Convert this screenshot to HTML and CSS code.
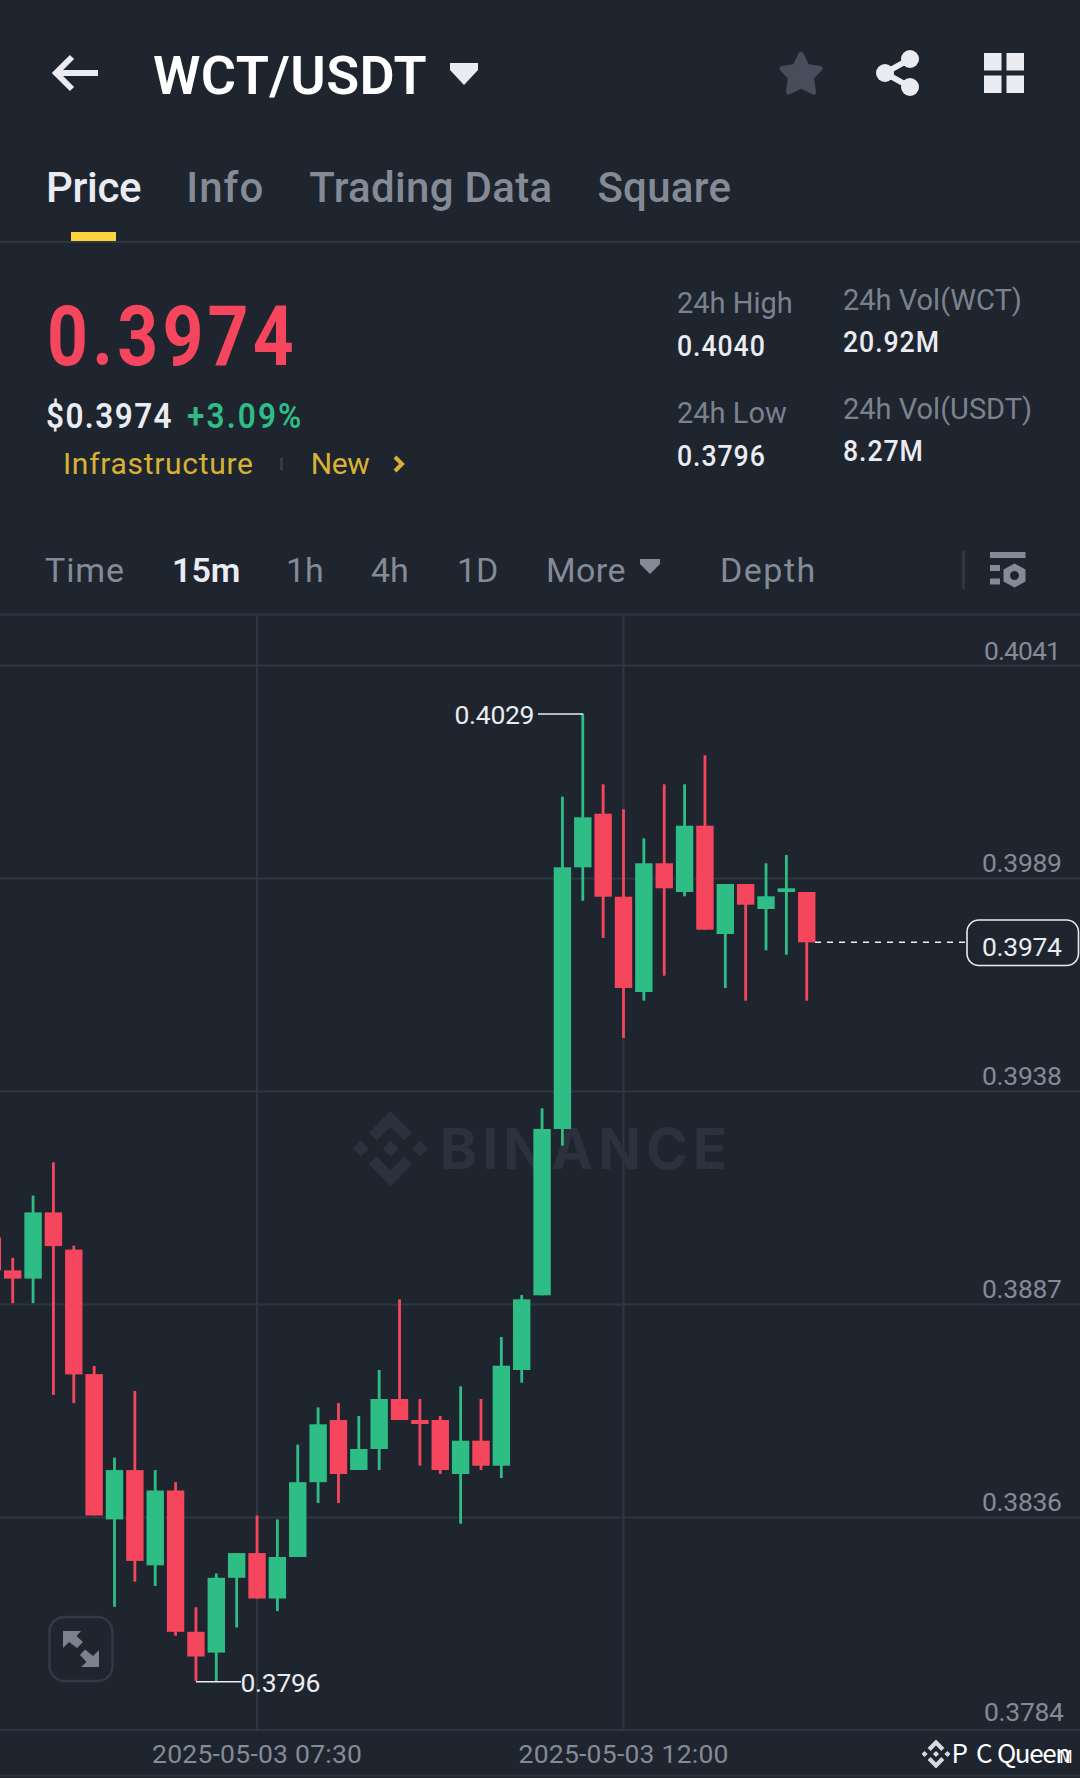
FILE: index.html
```html
<!DOCTYPE html>
<html lang="en">
<head>
    <meta charset="UTF-8">
    <meta name="viewport" content="width=device-width, initial-scale=1.0">
    <title>WCT/USDT</title>
    <link rel="stylesheet" href="styles.css">
</head>
<body>
    <header class="topbar">
        <svg class="back" width="48" height="40" viewBox="0 0 48 40">
            <path d="M47 20H6M21 4L5 20L21 36" fill="none" stroke="#eaecf2" stroke-width="6"/>
        </svg>
        <h1>WCT/USDT</h1>
        <svg class="caret" width="28" height="22" viewBox="0 0 28 22"><path d="M0 0H28V7L14 22L0 7Z" fill="#eaecf2"/></svg>
        <div class="actions">
            <svg width="46" height="46" viewBox="0 0 46 46">
                <path d="M23 4L29 16.5L42 18.5L33.5 27.5L35.5 42L23 36L10.5 42L12.5 27.5L4 18.5L17 16.5Z" fill="#474d5b" stroke="#474d5b" stroke-width="5" stroke-linejoin="round"/>
            </svg>
            <svg width="46" height="48" viewBox="0 0 46 48">
                <path d="M36 10L11 24L36 38" fill="none" stroke="#eaecf2" stroke-width="6"/>
                <circle cx="36" cy="10" r="9" fill="#eaecf2"/>
                <circle cx="11" cy="24" r="9" fill="#eaecf2"/>
                <circle cx="36" cy="38" r="9" fill="#eaecf2"/>
            </svg>
            <svg width="40" height="40" viewBox="0 0 40 40"><path d="M0 0h17.5v17.5H0zM22.5 0H40v17.5H22.5zM0 22.5h17.5V40H0zM22.5 22.5H40V40H22.5z" fill="#eaecf2"/></svg>
        </div>
    </header>

    <nav class="tabs">
        <a class="tab active">Price</a>
        <a class="tab info">Info</a>
        <a class="tab">Trading Data</a>
        <a class="tab">Square</a>
    </nav>

    <section class="summary">
        <div class="quote">
            <div class="price">0.3974</div>
            <div class="change"><span class="usd">$0.3974</span><span class="up">+3.09%</span></div>
            <div class="tags">
                <span class="tag">Infrastructure</span>
                <i class="tag-line"></i>
                <span class="tag new">New</span>
                <svg width="14" height="18" viewBox="0 0 14 18"><path d="M3 2L10 9L3 16" fill="none" stroke="#d9b233" stroke-width="4"/></svg>
            </div>
        </div>
        <dl class="stats">
            <dt>24h High</dt>
            <dd>0.4040</dd>
            <dt>24h Low</dt>
            <dd>0.3796</dd>
        </dl>
        <dl class="stats vol">
            <dt>24h Vol(WCT)</dt>
            <dd>20.92M</dd>
            <dt>24h Vol(USDT)</dt>
            <dd>8.27M</dd>
        </dl>
    </section>

    <nav class="periods">
        <a class="time">Time</a>
        <a class="m15">15m</a>
        <a class="h1">1h</a>
        <a class="h4">4h</a>
        <a class="d1">1D</a>
        <a class="more">More <svg width="20" height="15" viewBox="0 0 20 15"><path d="M0 0H20V5L10 15L0 5Z" fill="#848a96"/></svg></a>
        <a class="depth">Depth</a>
        <i class="period-line"></i>
        <svg width="36" height="38" viewBox="0 0 36 38">
            <path d="M0 1H35.5V7H0zM0 14H10V20H0zM0 27.5H10V33.5H0z" fill="#848a96"/>
            <path d="M24.500 12.500L35.500 18.500V30.500L24.500 36.500L13.500 30.500V18.500ZM24.500 20A4.500 4.500 0 1 0 24.500 29A4.500 4.500 0 1 0 24.500 20Z" fill="#848a96" fill-rule="evenodd"/>
        </svg>
    </nav>

    <main class="chart">
        <svg width="1080" height="1162" viewBox="0 616 1080 1162">
            <defs>
                <symbol id="logo" viewBox="0 0 76 76">
                    <path d="M38 0L60 22L52 30L38 16L24 30L16 22ZM38 76L60 54L52 46L38 60L24 46L16 54ZM0 38L8 30L16 38L8 46ZM60 38L68 30L76 38L68 46ZM30 38L38 30L46 38L38 46Z"/>
                </symbol>
            </defs>
            <g class="grid">
                <path d="M0 665.500H1080M0 878.500H1080M0 1091.500H1080M0 1304.500H1080M0 1517.500H1080M0 1730H1080M257 616V1730M623.500 616V1730"/>
                <path d="M0 1775.500H1080"/>
            </g>
            <g class="watermark">
                <use href="#logo" x="353" y="1111" width="75" height="75"/>
                <text x="440" y="1169" textLength="287">BINANCE</text>
            </g>
            <g id="candles"></g>
            <path class="mark" d="M538 714H583M196 1681.700H241"/>
            <g class="label light">
                <text x="454.500" y="724" textLength="80">0.4029</text>
                <text x="240.500" y="1692" textLength="80">0.3796</text>
            </g>
            <path class="last-line" d="M815 942.300H967"/>
            <rect class="last-box" x="967" y="920" width="111.500" height="45.500" rx="12"/>
            <text class="label light" x="982" y="956" textLength="80">0.3974</text>
            <g class="label">
                <text x="984" y="660" textLength="77">0.4041</text>
                <text x="982" y="872" textLength="80">0.3989</text>
                <text x="982" y="1085" textLength="80">0.3938</text>
                <text x="982" y="1298" textLength="80">0.3887</text>
                <text x="982" y="1511" textLength="80">0.3836</text>
                <text x="984" y="1721" textLength="80">0.3784</text>
                <text x="152" y="1763" textLength="210">2025-05-03 07:30</text>
                <text x="518.500" y="1763" textLength="210">2025-05-03 12:00</text>
            </g>
            <g class="expand">
                <rect x="49.500" y="1617" width="63" height="64" rx="15"/>
                <path d="M63 1631H81L76.500 1636L83 1642L77 1648L69 1642L63 1648ZM99 1667H81L86.500 1662L80 1655L85 1649.500L93 1656L99 1650Z"/>
            </g>
            <g class="user">
                <use href="#logo" x="921.500" y="1739.500" width="29" height="29"/>
                <text x="951.500" y="1763">P</text>
                <text x="976" y="1763">C</text>
                <text x="997" y="1763" textLength="74">Queen</text>
                <text class="tail" x="1059" y="1763" textLength="13">M</text>
            </g>
        </svg>
    </main>
    <script src="chart.js"></script>
</body>
</html>
```
FILE: styles.css
```css
body { margin: 0; background-color: #1e252f; color: #eaecf2; font-family: Roboto, "Liberation Sans", sans-serif; width: 1080px; height: 1778px; overflow: hidden; }
svg { display: block; flex: none; }
.topbar { display: flex; align-items: center; height: 146px; padding: 0 56px 0 51px; }
.topbar h1 { margin: 5px 0 0 54px; font-size: 54px; font-weight: 600; line-height: 62px; color: #fff; letter-spacing: 0.4px; }
.caret { margin-left: 23px; margin-top: 2px; }
.actions { display: flex; align-items: center; margin-left: auto; }
.actions svg { margin-left: 64px; }
.actions svg:nth-child(2) { margin-left: 50px; }

.tabs { display: flex; gap: 45px; height: 95px; padding-left: 46px; border-bottom: 2px solid #303741; font-size: 42px; font-weight: 500; line-height: 84px; color: #848a96; letter-spacing: 0.3px; }
.tab { display: block; }
.tab.info { letter-spacing: 1px; }
.active { color: #eaecf2; display: flex; flex-direction: column; letter-spacing: -0.3px; }
.active::after { content: ""; width: 45px; height: 9px; margin: 2px 0 0 25px; background: #fad33f; }

.summary { display: flex; height: 285px; }
.quote { width: 631px; padding-left: 46px; }
/* narrow digits */
.price, .usd, .up, .stats dd { transform-origin: 0 50%; }
.price { margin: 45px 0 0 1px; font-size: 84px; line-height: 98px; font-weight: 700; color: #f6465d; letter-spacing: 5px; transform: scaleX(0.85); }
.change { display: flex; margin-top: 11px; font-size: 35px; line-height: 40px; font-weight: 600; }
.usd, .up { transform: scaleX(0.9); letter-spacing: 1.6px; }
.usd { width: 141px; }
.up { color: #2ebd85; letter-spacing: 2.4px; }
.tags { display: flex; align-items: center; margin-top: 6px; padding-left: 17px; font-size: 30px; line-height: 42px; color: #d9b233; }
.tag { letter-spacing: 0.7px; }
.tag.new { letter-spacing: -0.4px; }
.tag-line { width: 3px; height: 12px; margin: 0 28px 0 26px; background: #343b47; }
.tags svg { margin-left: 23px; }
.stats { width: 166px; margin: 39px 0 0; font-size: 29px; line-height: 42px; white-space: nowrap; }
.stats dt { color: #7b818d; }
.stats dd { margin: 1px 0 25px; font-weight: 500; transform: scaleX(0.92); letter-spacing: 1px; }
.vol { margin-top: 36px; width: auto; }
.vol dd { margin: 0 0 25px; }

.periods { display: flex; align-items: center; box-sizing: border-box; height: 88px; padding: 0 54px 2px 45px; border-bottom: 3px solid #2a313c; font-size: 34px; line-height: 42px; color: #848a96; }
.periods a { display: flex; align-items: center; white-space: nowrap; }
.time { width: 127px; letter-spacing: 0.9px; }
.m15 { width: 114px; font-weight: 600; color: #eaecf2; }
.h1 { width: 85px; }
.h4 { width: 86px; }
.d1 { width: 89px; }
.more { width: 174px; letter-spacing: 0.4px; }
.more svg { margin: -6px 0 0 14px; }
.depth { letter-spacing: 1.5px; }
.period-line { width: 3px; height: 38px; margin: 0 25px 0 auto; background: #303741; }

.grid { fill: none; stroke: #2f3641; stroke-width: 2; }
.watermark { fill: #2b323d; }
.watermark text { font: 700 56px Inter, sans-serif; }
.red { fill: #f6465d; }
.green { fill: #2ebd85; }
.mark { fill: none; stroke: #eaecf2; stroke-width: 1.6; }
.label { font-size: 26.5px; fill: #848a96; }
.light { fill: #eaecf2; }
.last-line { stroke: #eaecf2; stroke-width: 1.6; stroke-dasharray: 6 6; }
.last-box { fill: #1e252f; stroke: #eaecf2; stroke-width: 1.6; }
.expand rect { fill: #1e252f; stroke: #333a46; stroke-width: 2.5; }
.expand path { fill: #7b818d; }
.user { fill: #fff; font: 26px "Noto Sans CJK SC", "Noto Sans", sans-serif; }
.user use { fill: #d6d9df; }
.user .tail { font-size: 17px; }
```
FILE: chart.js
```javascript
// color, wick top, body top, body bottom, wick bottom
const candles = [
    ['red', 1237.5, 1237.5, 1270.4, 1270.4],
    ['red', 1257.8, 1270.4, 1278.6, 1303.2],
    ['green', 1195.6, 1212.4, 1278.6, 1303.2],
    ['red', 1162.3, 1212.4, 1246.1, 1394.9],
    ['red', 1245.7, 1249.6, 1374.4, 1403.1],
    ['red', 1365.9, 1374.1, 1515.5, 1515.5],
    ['green', 1457.6, 1470.1, 1519.4, 1606.8],
    ['red', 1391, 1470.1, 1560.9, 1581.7],
    ['green', 1470.1, 1490.5, 1565.3, 1586],
    ['red', 1482.2, 1490.5, 1631.8, 1635.7],
    ['red', 1607.2, 1631.8, 1656.5, 1681.1],
    ['green', 1573.5, 1577.8, 1652.6, 1681.1],
    ['green', 1553.1, 1553.1, 1577.8, 1627.5],
    ['red', 1515.5, 1553.1, 1598.5, 1598.5],
    ['green', 1519.4, 1557, 1598.5, 1611.1],
    ['green', 1444.6, 1482.2, 1557, 1557],
    ['green', 1407.4, 1424.3, 1482.2, 1503],
    ['red', 1403.1, 1420, 1474, 1503],
    ['green', 1416, 1449, 1470, 1470],
    ['green', 1370, 1399, 1449, 1470],
    ['red', 1299.3, 1399, 1420, 1420],
    ['red', 1399, 1420, 1424, 1465.7],
    ['red', 1416, 1420, 1470, 1474],
    ['green', 1386.3, 1440.7, 1474, 1523.7],
    ['red', 1399, 1440.7, 1465.7, 1470],
    ['green', 1337, 1365.7, 1465.7, 1478],
    ['green', 1295, 1299.3, 1370, 1382.7],
    ['green', 1108.3, 1129, 1295.3, 1295.3],
    ['green', 796.7, 867.3, 1129, 1145.7],
    ['green', 713.7, 817.3, 867.3, 900.7],
    ['red', 784.3, 813.7, 896.7, 938],
    ['red', 809.3, 896.7, 988, 1038],
    ['green', 838.3, 863.3, 992, 1000.7],
    ['red', 784.3, 863.3, 888.3, 975.7],
    ['green', 784.3, 825.7, 892, 896.3],
    ['red', 755.3, 825.7, 929.7, 929.7],
    ['green', 884, 884, 934, 988],
    ['red', 884, 884, 904.7, 1000.7],
    ['green', 863.3, 896.3, 909, 950.3],
    ['green', 855, 888.3, 892, 954.7],
    ['red', 892, 892, 942.3, 1000.7]
];

const step = 20.36;
const bodyWidth = 17.4;
let html = '';
candles.forEach(function ([color, high, top, bottom, low], i) {
    const x = 12.7 + (i - 1) * step;
    html += `<rect class="${color}" x="${x - 1.4}" y="${high}" width="2.8" height="${low - high}"/>`;
    html += `<rect class="${color}" x="${x - bodyWidth / 2}" y="${top}" width="${bodyWidth}" height="${bottom - top}"/>`;
});
document.getElementById('candles').innerHTML = html;
```
